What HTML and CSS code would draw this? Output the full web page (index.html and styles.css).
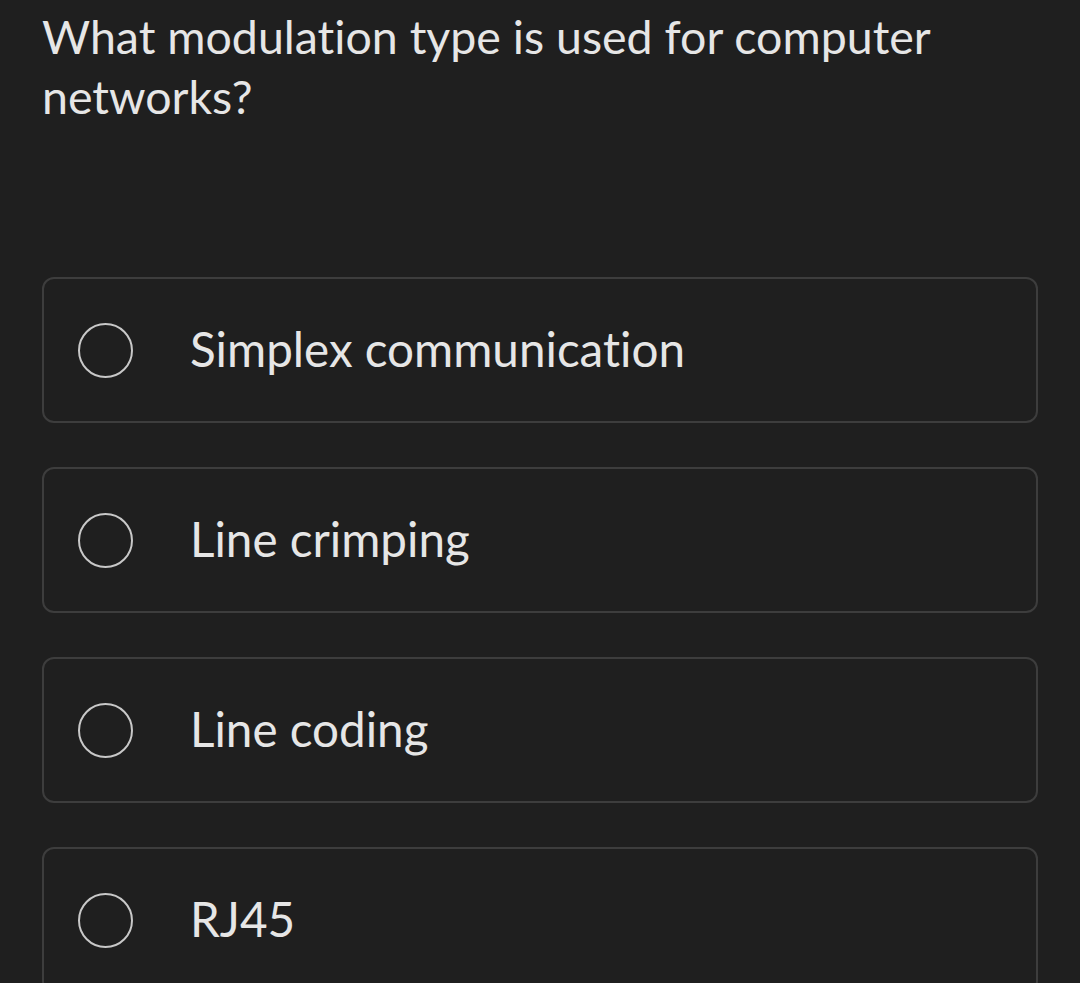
FILE: index.html
```html
<!DOCTYPE html>
<html>
<head>
<meta charset="utf-8">
<link rel="stylesheet" href="styles.css">
</head>
<body>
<div class="page">
  <h1 class="question">What modulation type is used for computer networks?</h1>
  <div class="options">
    <label class="option"><span class="radio"></span><span class="label">Simplex communication</span></label>
    <label class="option"><span class="radio"></span><span class="label">Line crimping</span></label>
    <label class="option"><span class="radio"></span><span class="label">Line coding</span></label>
    <label class="option"><span class="radio"></span><span class="label">RJ45</span></label>
  </div>
</div>
</body>
</html>
```
FILE: styles.css
```css
html, body {
  margin: 0;
  padding: 0;
  background: #1f1f1f;
  height: 100%;
  overflow: hidden;
}
.page {
  padding: 0 42px;
  font-family: "Lato", "Noto Sans", sans-serif;
  font-variant-ligatures: none;
  color: #e6e6e6;
}
.question {
  margin: 0;
  padding-top: 6px;
  width: 940px;
  font-size: 46.5px;
  font-weight: 400;
  line-height: 60px;
}
.options {
  margin-top: 151px;
  display: flex;
  flex-direction: column;
  gap: 44px;
}
.option {
  display: flex;
  align-items: center;
  height: 142px;
  border: 2px solid #3d3d3d;
  border-radius: 12px;
  padding-left: 34px;
}
.radio {
  width: 51px;
  height: 51px;
  border: 2.5px solid #c8c8c8;
  border-radius: 50%;
  flex: none;
}
.label {
  margin-left: 57px;
  margin-bottom: 3px;
  font-size: 47.6px;
}
```
